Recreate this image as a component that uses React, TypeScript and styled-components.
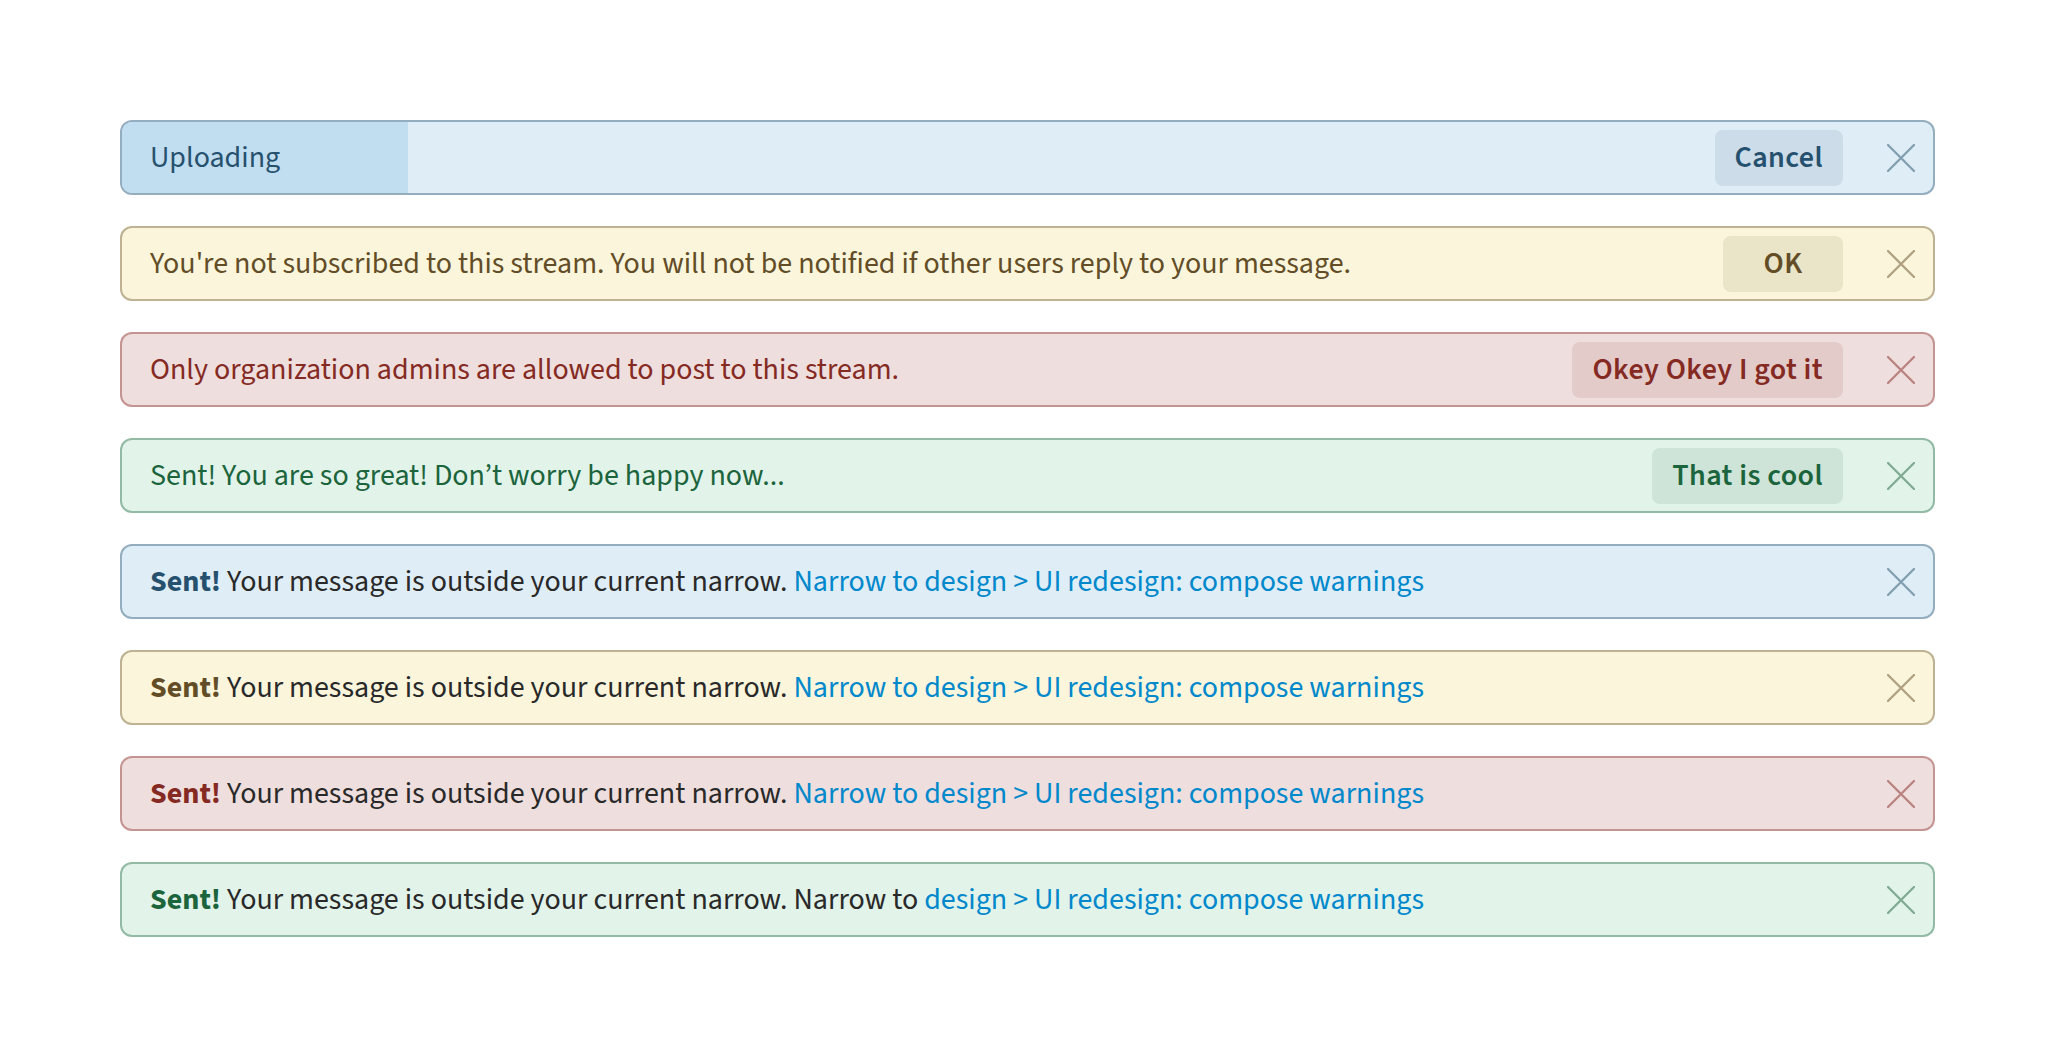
import React from "react";
import styled, { createGlobalStyle } from "styled-components";

const GlobalStyle = createGlobalStyle`
  html, body { margin: 0; padding: 0; background: #ffffff; }
  body {
    font-family: "Source Sans 3", "Noto Sans", sans-serif;
    -webkit-font-smoothing: antialiased;
  }
`;

type Variant = "info" | "warning" | "error" | "success";

const palette: Record<Variant, { bg: string; fg: string; rgb: string }> = {
  info: { bg: "hsl(204deg 58% 92%)", fg: "hsl(204deg 49% 29%)", rgb: "38, 81, 110" },
  warning: { bg: "hsl(50deg 75% 92%)", fg: "hsl(38deg 44% 27%)", rgb: "99, 77, 39" },
  error: { bg: "hsl(4deg 35% 90%)", fg: "hsl(4deg 58% 33%)", rgb: "133, 38, 36" },
  success: { bg: "hsl(147deg 43% 92%)", fg: "hsl(147deg 57% 25%)", rgb: "27, 100, 60" },
};

const Page = styled.main`
  display: flex;
  flex-direction: column;
  gap: 31px;
  padding: 120px 121px 120px 120px;
`;

const Banner = styled.div<{ $variant: Variant }>`
  position: relative;
  display: flex;
  align-items: center;
  box-sizing: border-box;
  height: 75px;
  border: 2px solid rgba(${(p) => palette[p.$variant].rgb}, 0.4);
  border-radius: 12px;
  overflow: hidden;
  background: ${(p) => palette[p.$variant].bg};
  color: ${(p) => palette[p.$variant].fg};
  font-size: 30px;
  line-height: 40px;
`;

const Progress = styled.div`
  position: absolute;
  left: 0;
  top: 0;
  bottom: 0;
  background: #c1ddf0;
`;

const Message = styled.p`
  position: relative;
  flex: 1;
  margin: 0;
  padding: 1px 0 0 28px;
  white-space: nowrap;
`;

const Plain = styled.span`
  color: hsl(0deg 0% 16%);
`;

const Strong = styled.strong`
  font-weight: 700;
`;

const Link = styled.a`
  color: hsl(200deg 100% 40%);
  text-decoration: none;
  cursor: pointer;
`;

const ActionButton = styled.button<{ $variant: Variant }>`
  position: relative;
  box-sizing: border-box;
  height: 56px;
  min-width: 120px;
  padding: 0 20px;
  border: none;
  border-radius: 8px;
  background: rgba(${(p) => palette[p.$variant].rgb}, 0.1);
  color: ${(p) => palette[p.$variant].fg};
  font-family: inherit;
  font-size: 30px;
  font-weight: 600;
  letter-spacing: 0.4px;
  line-height: 40px;
  cursor: pointer;
`;

const CloseButton = styled.button<{ $variant: Variant }>`
  position: relative;
  display: flex;
  align-items: center;
  justify-content: center;
  width: 64px;
  height: 56px;
  margin-left: 26px;
  padding: 0;
  border: none;
  background: transparent;
  color: rgba(${(p) => palette[p.$variant].rgb}, 0.5);
  cursor: pointer;
`;

const CloseIcon = () => (
  <svg width="28" height="28" viewBox="0 0 28 28" fill="none" aria-hidden="true">
    <path d="M1 1 L27 27 M27 1 L1 27" stroke="currentColor" strokeWidth="2.3" strokeLinecap="round" />
  </svg>
);

type Row = {
  variant: Variant;
  content: React.ReactNode;
  action?: string;
  progress?: number;
};

const sent = (prefix: string, link: string): React.ReactNode => (
  <>
    <Strong>Sent!</Strong>
    <Plain> Your message is outside your current narrow. {prefix}</Plain>
    <Link>{link}</Link>
  </>
);

const rows: Row[] = [
  { variant: "info", content: "Uploading", action: "Cancel", progress: 15.8 },
  {
    variant: "warning",
    content:
      "You're not subscribed to this stream. You will not be notified if other users reply to your message.",
    action: "OK",
  },
  {
    variant: "error",
    content: "Only organization admins are allowed to post to this stream.",
    action: "Okey Okey I got it",
  },
  {
    variant: "success",
    content: "Sent! You are so great! Don\u2019t worry be happy now...",
    action: "That is cool",
  },
  { variant: "info", content: sent("", "Narrow to design > UI redesign: compose warnings") },
  { variant: "warning", content: sent("", "Narrow to design > UI redesign: compose warnings") },
  { variant: "error", content: sent("", "Narrow to design > UI redesign: compose warnings") },
  { variant: "success", content: sent("Narrow to ", "design > UI redesign: compose warnings") },
];

export default function App() {
  return (
    <>
      <GlobalStyle />
      <Page>
        {rows.map((r, i) => (
          <Banner key={i} $variant={r.variant}>
            {r.progress !== undefined && <Progress style={{ width: `${r.progress}%` }} />}
            <Message>{r.content}</Message>
            {r.action && <ActionButton $variant={r.variant}>{r.action}</ActionButton>}
            <CloseButton $variant={r.variant} aria-label="Close">
              <CloseIcon />
            </CloseButton>
          </Banner>
        ))}
      </Page>
    </>
  );
}
